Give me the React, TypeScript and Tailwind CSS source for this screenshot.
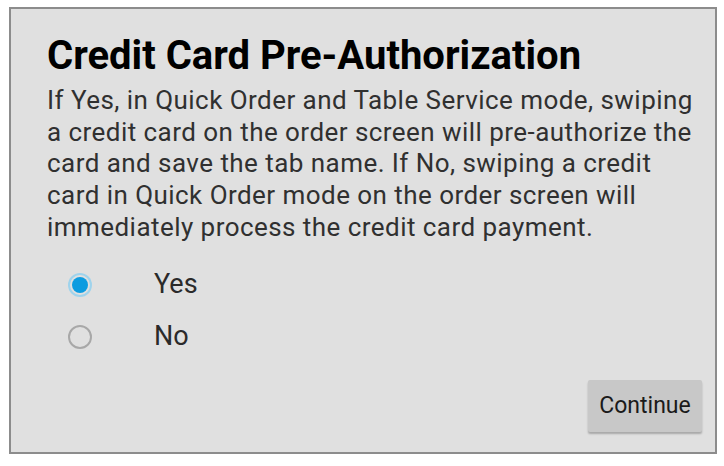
export default function App() {
    return (
        <div className="w-[724px] h-[466px] bg-white pt-[7px] pl-[9px]" style={{ fontFamily: 'Roboto, sans-serif' }}>
            <div className="w-[708px] h-[447px] border-2 border-[#8c8c8c] bg-[#e0e0e0] flex flex-col pl-[36px] pr-[10px]">
                <h1 className="mt-[24px] text-[40px] leading-[46px] font-bold text-black">Credit Card Pre-Authorization</h1>
                <p className="mt-[6px] text-[26px] leading-[31.7px] tracking-[0.45px] text-[#303030]">
                    If Yes, in Quick Order and Table Service mode, swiping a credit card on the order screen will pre-authorize the card and save the tab name. If No, swiping a credit card in Quick Order mode on the order screen will immediately process the credit card payment.
                </p>

                <div className="mt-[26px] flex flex-col gap-[22px] pl-[21px]">
                    <label className="flex items-center h-[30px]">
                        <span className="w-[24px] h-[24px] rounded-full bg-[#9fd3ec] flex items-center justify-center">
                            <span className="w-[20px] h-[20px] rounded-full bg-[#e0e0e0] flex items-center justify-center">
                                <span className="w-[16px] h-[16px] rounded-full bg-[#0d9ce0]" />
                            </span>
                        </span>
                        <span className="ml-[62px] text-[27px] text-[#2a2a2a]">Yes</span>
                    </label>
                    <label className="flex items-center h-[30px]">
                        <span className="w-[24px] h-[24px] rounded-full border-2 border-[#a8a8a8]" />
                        <span className="ml-[62px] text-[27px] text-[#2a2a2a]">No</span>
                    </label>
                </div>

                <div className="mt-auto mb-[20px] pr-[3px] flex justify-end">
                    <button className="w-[114px] h-[52px] bg-[#c8c8c8] rounded-[2px] shadow-[0_2px_2px_rgba(0,0,0,0.25)] text-[23px] text-[#1a1a1a]">Continue</button>
                </div>
            </div>
        </div>
    )
}
